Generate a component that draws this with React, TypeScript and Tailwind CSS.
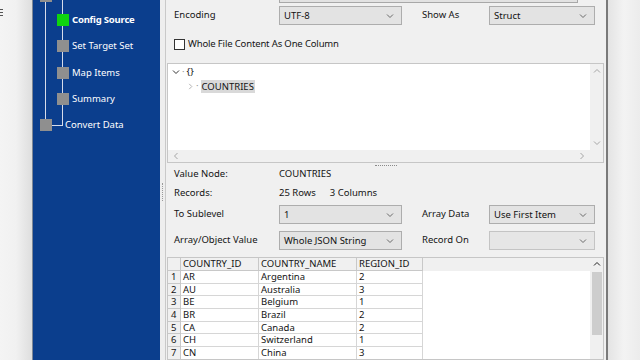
import React from "react";

function Chevron({ dir = "down", color = "#707070", size = 7 }: { dir?: "down" | "up" | "left" | "right"; color?: string; size?: number }) {
  const pts: Record<string, string> = {
    down: "1,2.5 4,5.5 7,2.5",
    up: "1,5.5 4,2.5 7,5.5",
    left: "5.5,1 2.5,4 5.5,7",
    right: "2.5,1 5.5,4 2.5,7",
  };
  return (
    <svg width={size} height={size} viewBox="0 0 8 8" className="shrink-0">
      <polyline points={pts[dir]} fill="none" stroke={color} strokeWidth="1" />
    </svg>
  );
}

function Select({ value, w, disabled }: { value: string; w: string; disabled?: boolean }) {
  return (
    <div className={`${w} h-[19px] flex items-center justify-between pl-[4px] pr-[7px] border ${disabled ? "border-[#c4c4c4] bg-[#e6e6e6]" : "border-[#adadad] bg-[#e3e3e3]"}`}>
      <span className="text-[#111] leading-none">{value}</span>
      <Chevron dir="down" color="#6a6a6a" size={8} />
    </div>
  );
}

const rows = [
  ["AR", "Argentina", "2"],
  ["AU", "Australia", "3"],
  ["BE", "Belgium", "1"],
  ["BR", "Brazil", "2"],
  ["CA", "Canada", "2"],
  ["CH", "Switzerland", "1"],
  ["CN", "China", "3"],
];

export default function App() {
  return (
    <div className="w-[640px] h-[360px] flex overflow-hidden bg-[#f0f0f0] font-['Noto_Sans',sans-serif] text-[9.5px] text-[#141414]">
      {/* left strip */}
      <div className="w-[32px] h-full relative bg-gradient-to-r from-[#f4f4f4] via-[#f1f1f1] to-[#dedede]">
        <div className="absolute left-0 top-[9px] w-[3px] h-[1px] bg-[#555]" />
        <div className="absolute left-0 top-[12px] w-[3px] h-[1px] bg-[#555]" />
        <div className="absolute left-0 top-[15px] w-[3px] h-[1px] bg-[#555]" />
      </div>

      {/* sidebar */}
      <div className="w-[128px] h-full relative bg-[#0b3e8d] border-l border-[#7d8796] text-white">
        <div className="absolute left-[12px] top-0 w-[1px] h-[119px] bg-[#d6dcea]" />
        <div className="absolute left-[29px] top-0 w-[1px] h-[125px] bg-[#d6dcea]" />
        <div className="absolute left-[19px] top-[125px] w-[11px] h-[1px] bg-[#d6dcea]" />
        <div className="absolute left-[7px] top-[-10px] w-[12px] h-[12px] bg-[#8f8f8f]" />
        <div className="relative flex flex-col pt-[7px]">
          <div className="h-[26.25px] flex items-center pl-[24px] gap-[3px]">
            <div className="w-[12px] h-[12px] bg-[#0fd40f]" />
            <span className="font-bold tracking-[-0.2px]">Config Source</span>
          </div>
          <div className="h-[26.25px] flex items-center pl-[24px] gap-[3px]">
            <div className="w-[12px] h-[12px] bg-[#8f8f8f]" />
            <span>Set Target Set</span>
          </div>
          <div className="h-[26.25px] flex items-center pl-[24px] gap-[3px]">
            <div className="w-[12px] h-[12px] bg-[#8f8f8f]" />
            <span>Map Items</span>
          </div>
          <div className="h-[26.25px] flex items-center pl-[24px] gap-[3px]">
            <div className="w-[12px] h-[12px] bg-[#8f8f8f]" />
            <span>Summary</span>
          </div>
          <div className="h-[26.25px] flex items-center pl-[7px] gap-[13px]">
            <div className="w-[12px] h-[12px] bg-[#8f8f8f]" />
            <span>Convert Data</span>
          </div>
        </div>
      </div>

      {/* vertical splitter */}
      <div className="w-[6px] h-full bg-[#eeeeee] border-r border-[#c9c9c9] flex flex-col items-center pt-[183px]">
        <div className="w-[1px] h-[18px] border-l border-dotted border-[#9a9a9a]" />
      </div>

      {/* main panel */}
      <div className="w-[440px] h-full flex flex-col bg-[#f0f0f0]">
        <div className="ml-[113px] w-[299px] h-[3px] bg-[#e2e2e2] border-b border-x border-[#a8a8a8]" />

        <div className="mt-[3px] h-[19px] flex items-center pl-[8px]">
          <div className="w-[105px]">Encoding</div>
          <Select value="UTF-8" w="w-[123px]" />
          <div className="w-[20px]" />
          <div className="w-[67px]">Show As</div>
          <Select value="Struct" w="w-[106px]" />
        </div>

        <div className="mt-[14px] h-[11px] flex items-center pl-[8px] gap-[3px]">
          <div className="w-[11px] h-[11px] border border-[#333] bg-white" />
          <span className="tracking-[-0.15px]">Whole File Content As One Column</span>
        </div>

        {/* tree box */}
        <div className="mt-[13px] ml-[1px] mr-[2px] h-[100px] border border-[#c6c6c6] bg-white flex flex-col">
          <div className="flex flex-1 min-h-0">
            <div className="flex-1 pt-[1px] flex flex-col">
              <div className="h-[14px] flex items-center pl-[4px]">
                <Chevron dir="down" color="#333" size={8} />
                <span className="ml-[2px] text-[#999]">·</span>
                <span className="ml-[2px]">{"{}"}</span>
              </div>
              <div className="h-[14px] flex items-center pl-[19px]">
                <Chevron dir="right" color="#a8a8a8" size={7} />
                <span className="ml-[2px] text-[#999]">·</span>
                <span className="ml-[2px] px-[1px] bg-[#d9d9d9] leading-[13px]">COUNTRIES</span>
              </div>
            </div>
            <div className="w-[13px] bg-[#f0f0f0] flex flex-col justify-between items-center py-[3px]">
              <Chevron dir="up" color="#a6a6a6" size={8} />
              <Chevron dir="down" color="#a6a6a6" size={8} />
            </div>
          </div>
          <div className="h-[12px] flex">
            <div className="flex-1 bg-[#f0f0f0] flex items-center justify-between px-[4px]">
              <Chevron dir="left" color="#a6a6a6" size={8} />
              <Chevron dir="right" color="#a6a6a6" size={8} />
            </div>
            <div className="w-[13px] bg-[#f0f0f0]" />
          </div>
        </div>

        {/* horizontal splitter */}
        <div className="h-[5px] flex flex-col items-center justify-center">
          <div className="w-[22px] h-[1px] border-t border-dotted border-[#8a8a8a]" />
        </div>

        <div className="h-[12px] flex items-center pl-[8px]">
          <div className="w-[105px]">Value Node:</div>
          <div>COUNTRIES</div>
        </div>
        <div className="mt-[7px] h-[12px] flex items-center pl-[8px]">
          <div className="w-[105px]">Records:</div>
          <div>25 Rows</div>
          <div className="ml-[14px]">3 Columns</div>
        </div>

        <div className="mt-[6px] h-[19px] flex items-center pl-[8px]">
          <div className="w-[105px]">To Sublevel</div>
          <Select value="1" w="w-[123px]" />
          <div className="w-[20px]" />
          <div className="w-[67px]">Array Data</div>
          <Select value="Use First Item" w="w-[106px]" />
        </div>
        <div className="mt-[7px] h-[19px] flex items-center pl-[8px]">
          <div className="w-[105px]">Array/Object Value</div>
          <Select value="Whole JSON String" w="w-[123px]" />
          <div className="w-[20px]" />
          <div className="w-[67px]">Record On</div>
          <Select value="" w="w-[106px]" disabled />
        </div>

        {/* table */}
        <div className="mt-[7px] ml-[1px] mr-[2px] flex-1 min-h-0 border border-[#c6c6c6] bg-white flex overflow-hidden">
          <div className="flex-1 flex flex-col">
            <div className="h-[13px] flex shrink-0 bg-[#f0f0f0]">
              <div className="w-[13px] border-r border-b border-[#c8c8c8]" />
              <div className="w-[78px] border-r border-b border-[#c8c8c8] pl-[2px] leading-[12px]">COUNTRY_ID</div>
              <div className="w-[98px] border-r border-b border-[#c8c8c8] pl-[2px] leading-[12px]">COUNTRY_NAME</div>
              <div className="w-[66px] border-r border-b border-[#c8c8c8] pl-[2px] leading-[12px]">REGION_ID</div>
            </div>
            {rows.map((r, i) => (
              <div key={i} className="h-[12.7px] flex shrink-0">
                <div className="w-[13px] bg-[#f0f0f0] border-r border-b border-[#c8c8c8] pl-[3px] leading-[11.7px]">{i + 1}</div>
                <div className="w-[78px] border-r border-b border-[#d6d6d6] pl-[2px] leading-[11.7px]">{r[0]}</div>
                <div className="w-[98px] border-r border-b border-[#d6d6d6] pl-[2px] leading-[11.7px]">{r[1]}</div>
                <div className="w-[66px] border-r border-b border-[#d6d6d6] pl-[2px] leading-[11.7px]">{r[2]}</div>
              </div>
            ))}
          </div>
          <div className="w-[13px] bg-[#f0f0f0] flex flex-col items-center pt-[2px]">
            <Chevron dir="up" color="#222" size={8} />
            <div className="mt-[4px] w-[10px] h-[63px] bg-[#cdcdcd]" />
          </div>
        </div>
      </div>

      {/* right edge */}
      <div className="w-[2px] h-full bg-[#7a7a7a]" />
      <div className="flex-1 h-full bg-gradient-to-r from-[#e4e4e4] via-[#f3f3f3] to-[#ececec]" />
    </div>
  );
}
